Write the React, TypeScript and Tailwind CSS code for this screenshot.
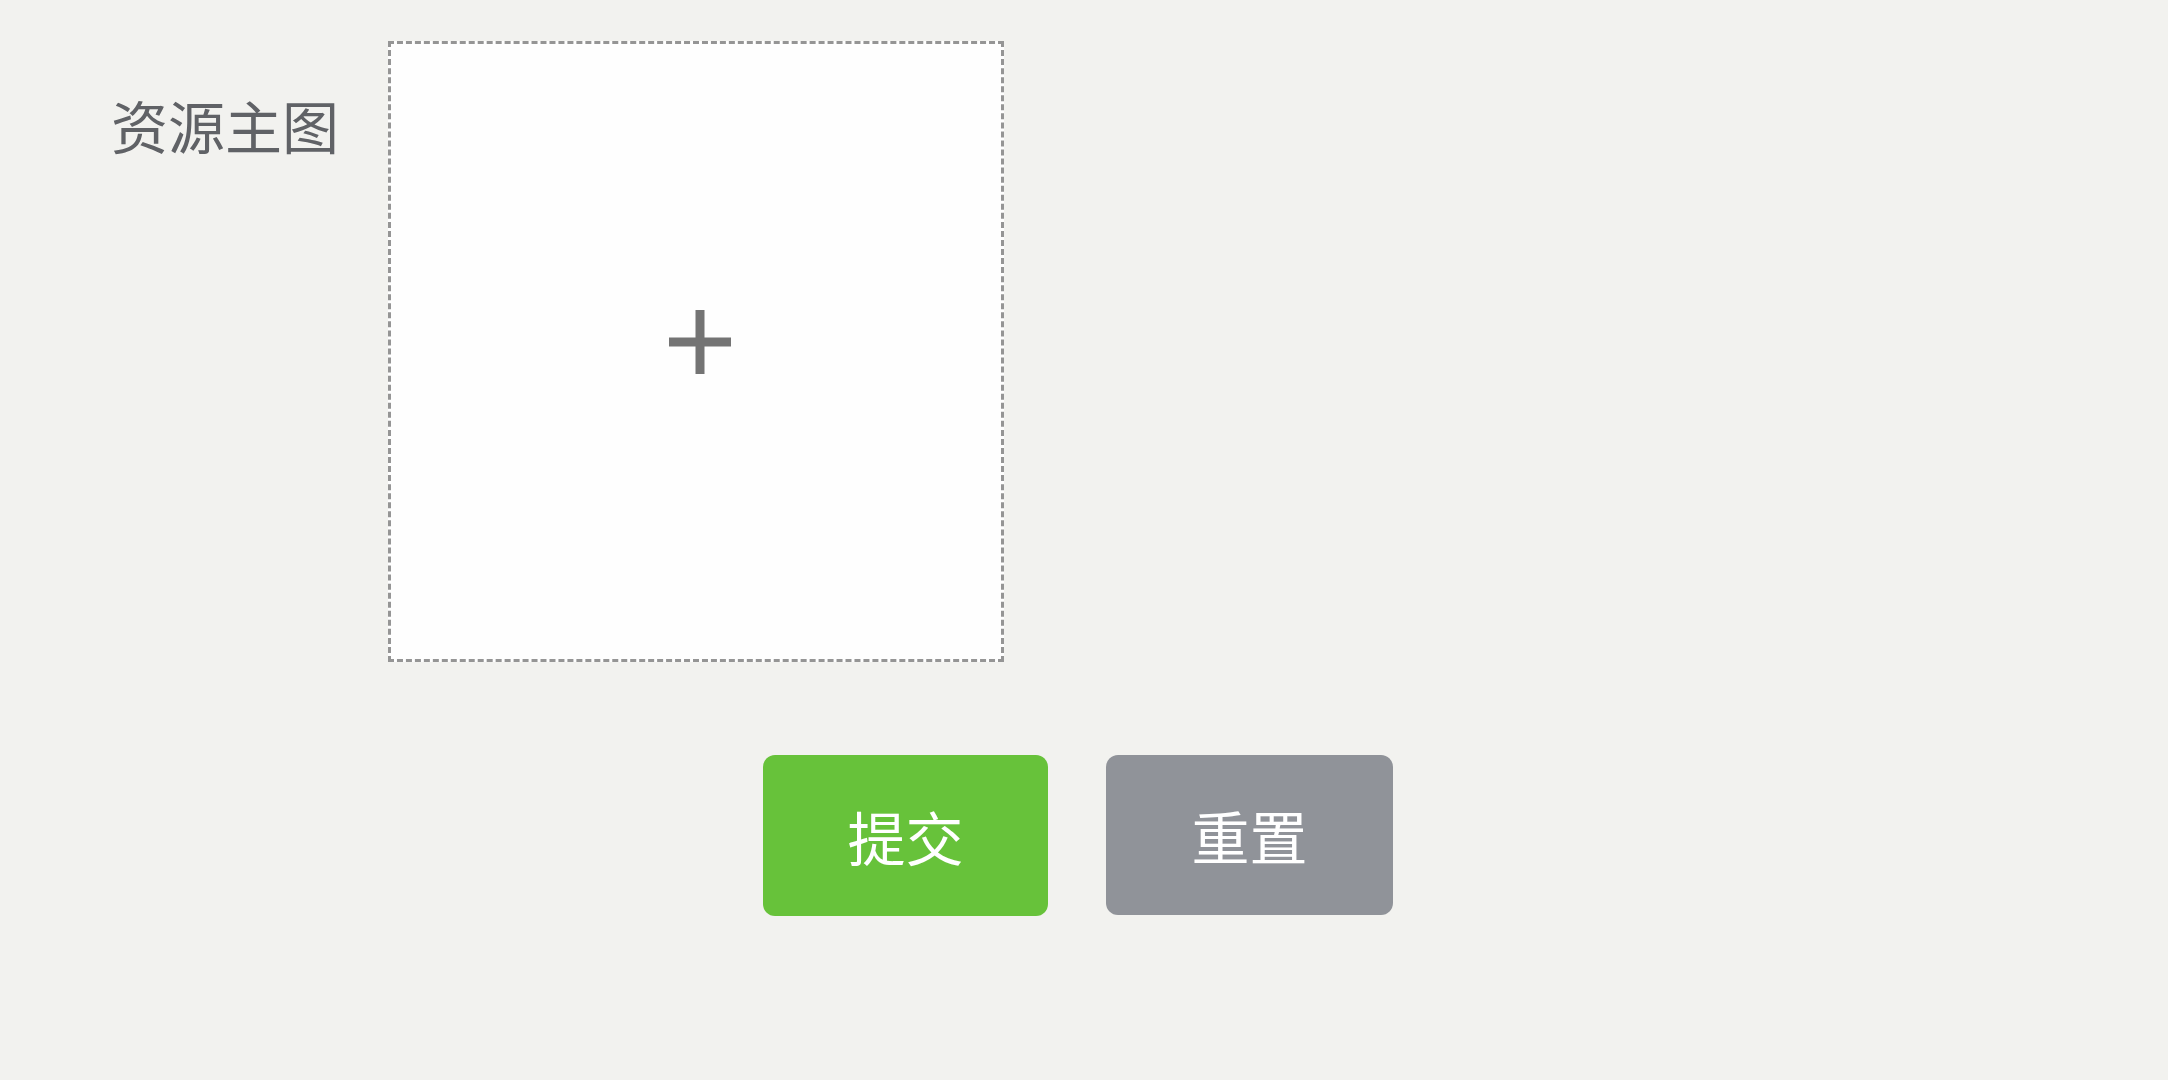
import { useState } from 'react'

function PlusIcon() {
  return (
    <svg width="62" height="64" viewBox="0 0 62 64" fill="none">
      <path d="M31 0v64M0 32h62" stroke="#747474" strokeWidth="9" />
    </svg>
  )
}

export default function App() {
  const [file, setFile] = useState<string | null>(null)

  return (
    <div className="min-h-screen w-full bg-[#f2f2ef] font-['Noto_Sans_CJK_SC','Noto_Sans',sans-serif]">
      <form
        className="flex flex-col pt-[41px] pl-[111px]"
        onSubmit={(e) => { e.preventDefault() }}
      >
        <div className="flex">
          <label className="w-[277px] shrink-0 mt-[55px] text-[57px] leading-none text-[#606266]">
            资源主图
          </label>
          <button
            type="button"
            onClick={() => { setFile(file ? null : file) }}
            className="w-[616px] h-[621px] flex items-center justify-center pb-[20px] pl-[7px] bg-[#fefefe] border-[3px] border-dashed border-[#959595]"
          >
            <PlusIcon />
          </button>
        </div>

        <div className="flex mt-[93px] pl-[652px] gap-[58px]">
          <button
            type="submit"
            className="w-[285px] h-[161px] rounded-[12px] bg-[#67c23a] text-white text-[58px] leading-none"
          >
            提交
          </button>
          <button
            type="reset"
            className="w-[287px] h-[160px] rounded-[12px] bg-[#909399] text-white text-[58px] leading-none"
          >
            重置
          </button>
        </div>
      </form>
    </div>
  )
}
